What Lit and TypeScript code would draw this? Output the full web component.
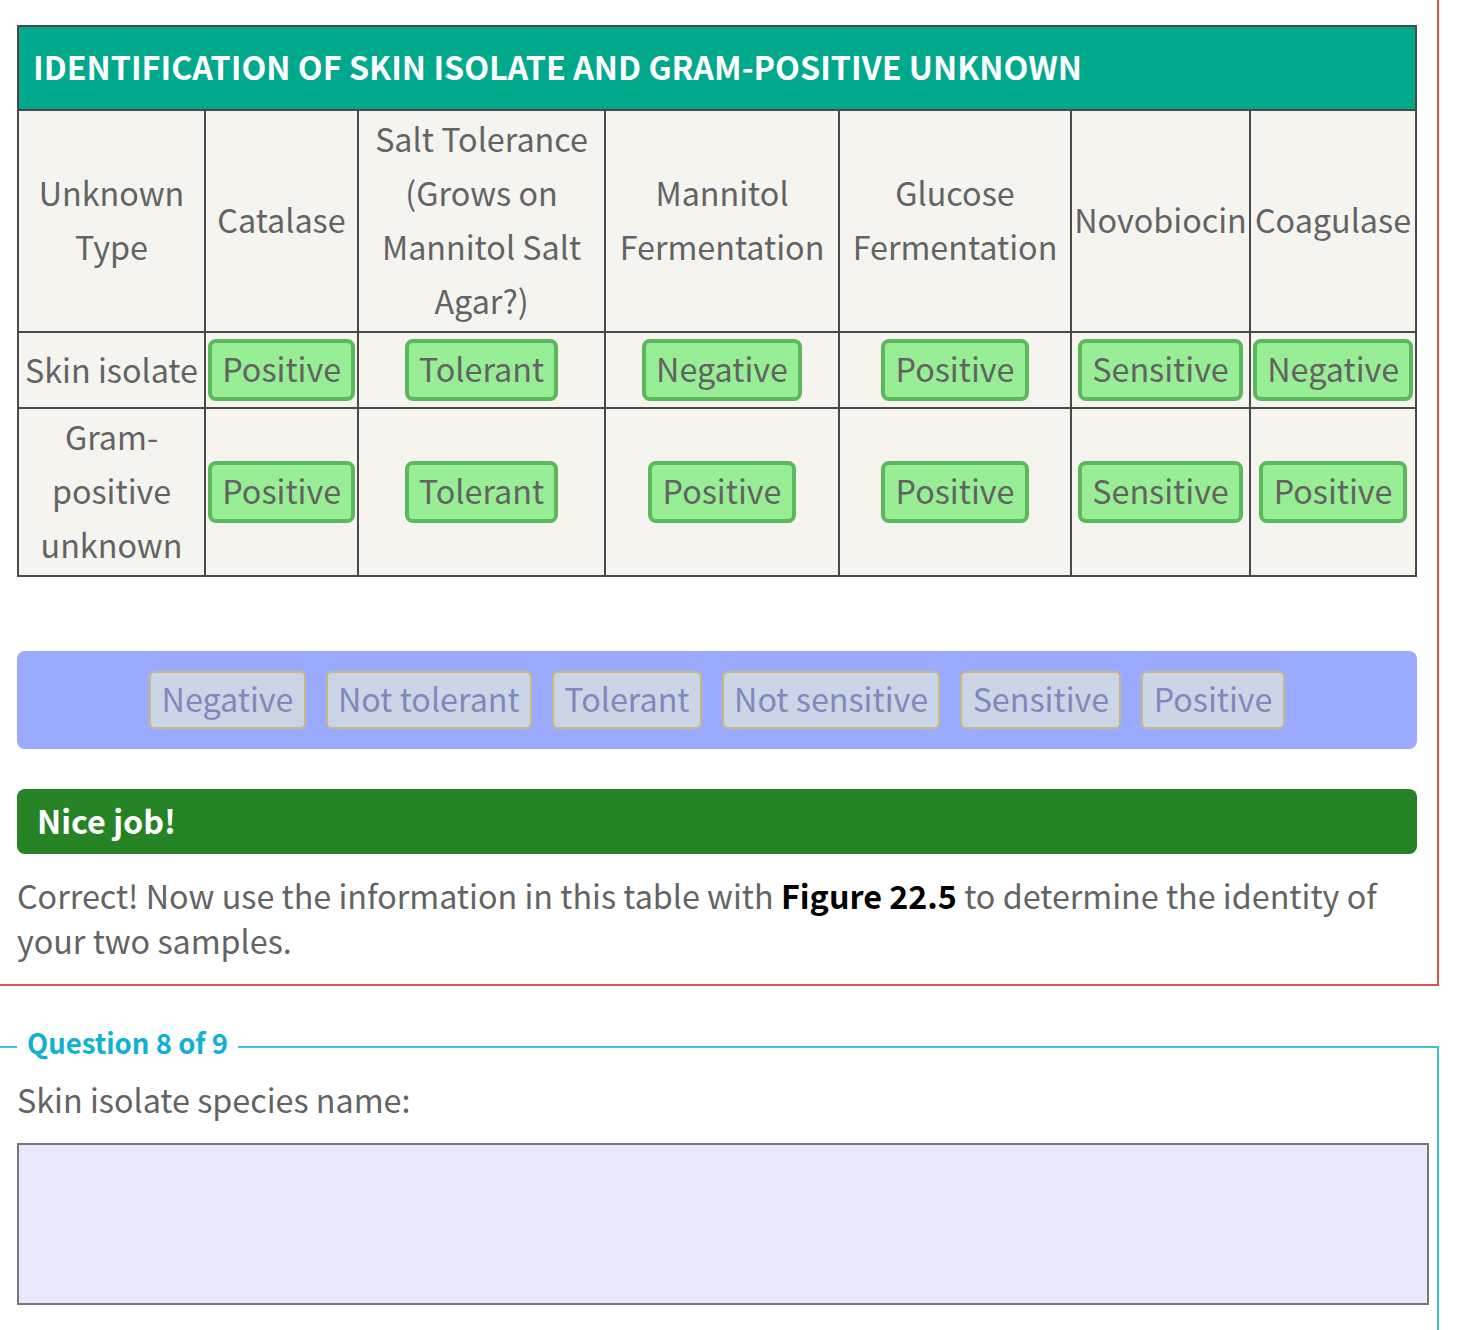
import { LitElement, html, css } from 'lit';
import { customElement } from 'lit/decorators.js';

const rows = [
  { name: 'Skin isolate', values: ['Positive', 'Tolerant', 'Negative', 'Positive', 'Sensitive', 'Negative'] },
  { name: 'Gram-positive unknown', values: ['Positive', 'Tolerant', 'Positive', 'Positive', 'Sensitive', 'Positive'] },
];

const heads = [
  'Unknown Type',
  'Catalase',
  'Salt Tolerance (Grows on Mannitol Salt Agar?)',
  'Mannitol Fermentation',
  'Glucose Fermentation',
  'Novobiocin',
  'Coagulase',
];

const colWidths = [187, 153, 247, 234, 232, 179, 166];
const bank = ['Negative', 'Not tolerant', 'Tolerant', 'Not sensitive', 'Sensitive', 'Positive'];

@customElement('app-root')
export class AppRoot extends LitElement {
  static styles = css`
    :host {
      display: block;
      width: 1464px;
      height: 1330px;
      overflow: hidden;
      background: #fff;
      color: #636363;
      font-family: 'Noto Sans CJK JP', 'Noto Sans', sans-serif;
      font-size: 32.3px;
    }

    .answered {
      box-sizing: border-box;
      width: 1439px;
      height: 986px;
      padding: 25px 0 0 17px;
      border-right: 2px solid #d9534f;
      border-bottom: 2px solid #d9534f;
    }

    table {
      width: 1398px;
      table-layout: fixed;
      border-collapse: collapse;
      background: #f5f4ef;
      line-height: 54px;
    }

    th, td {
      border: 2px solid #4a4a4a;
      padding: 0 2px 2px;
      font-weight: 400;
      text-align: center;
      vertical-align: middle;
    }

    th.title {
      height: 77px;
      padding: 0 14px 5px;
      background: #00a88c;
      color: #fff;
      font-weight: 700;
      text-align: left;
      line-height: 40px;
    }

    .row-head { height: 222px; }
    .row-head td { padding-bottom: 4px; }
    .row-skin { height: 76px; }
    .row-gram { height: 168px; }
    .row-gram td:first-child { padding-bottom: 4px; }

    .filled {
      display: inline-block;
      box-sizing: border-box;
      height: 62px;
      padding: 0 10.25px;
      border: 4px solid #5cb85c;
      border-radius: 8px;
      background: #98ee94;
      line-height: 50px;
      vertical-align: middle;
    }

    .bank {
      display: flex;
      justify-content: center;
      gap: 20px;
      box-sizing: border-box;
      width: 1400px;
      height: 98px;
      margin-top: 74px;
      padding-top: 20px;
      border-radius: 8px;
      background: #99aaff;
    }

    .chip {
      box-sizing: border-box;
      height: 58px;
      padding: 0 10.25px;
      border: 2px solid #c9b784;
      border-radius: 6px;
      background: #ccd5e6;
      color: #8089ba;
      line-height: 50px;
    }

    .alert {
      box-sizing: border-box;
      width: 1400px;
      height: 65px;
      margin-top: 40px;
      padding-left: 20px;
      border-radius: 8px;
      background: #258225;
      color: #fff;
      font-weight: 700;
      line-height: 62px;
    }

    .feedback {
      margin: 19px 0 0;
      width: 1400px;
      line-height: 45px;
    }

    .feedback b {
      color: #000;
      font-weight: 700;
    }

    fieldset {
      box-sizing: border-box;
      width: 1441px;
      height: 320px;
      margin: 36px 0 0 -2px;
      padding: 0 0 0 17px;
      border: 2px solid #3cc2dc;
      border-bottom: 0;
    }

    legend {
      padding: 0 10px 10px;
      color: #0fb1d2;
      font-size: 27.5px;
      font-weight: 700;
      line-height: 40px;
    }

    .prompt {
      margin: 0;
      line-height: 54px;
    }

    .answer {
      display: block;
      box-sizing: border-box;
      width: 1412px;
      height: 162px;
      margin: 17px 0 0;
      padding: 0;
      border: 2px solid #777;
      background: #e8e9fd;
      resize: none;
    }
  `;

  render() {
    return html`
      <div class="answered">
        <table>
          <colgroup>
            ${colWidths.map((w) => html`<col style="width:${w}px" />`)}
          </colgroup>
          <tr><th class="title" colspan="7">IDENTIFICATION OF SKIN ISOLATE AND GRAM-POSITIVE UNKNOWN</th></tr>
          <tr class="row-head">${heads.map((h) => html`<td>${h}</td>`)}</tr>
          ${rows.map(
            (r, i) => html`
              <tr class=${i === 0 ? 'row-skin' : 'row-gram'}>
                <td>${r.name}</td>
                ${r.values.map((v) => html`<td><span class="filled">${v}</span></td>`)}
              </tr>
            `
          )}
        </table>

        <div class="bank">
          ${bank.map((b) => html`<div class="chip">${b}</div>`)}
        </div>

        <div class="alert">Nice job!</div>
        <p class="feedback">
          Correct! Now use the information in this table with <b>Figure 22.5</b> to determine the identity of your two samples.
        </p>
      </div>

      <fieldset>
        <legend>Question 8 of 9</legend>
        <p class="prompt">Skin isolate species name:</p>
        <textarea class="answer"></textarea>
      </fieldset>
    `;
  }
}
